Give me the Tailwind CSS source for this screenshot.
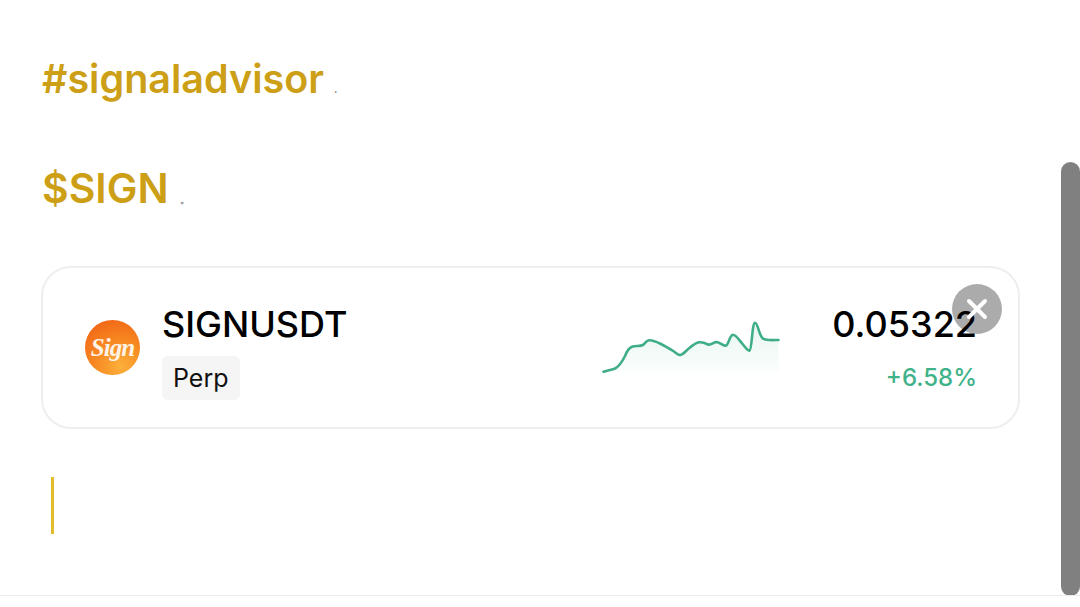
<!DOCTYPE html>
<html>
<head>
<meta charset="utf-8">
<script src="https://cdn.jsdelivr.net/npm/@tailwindcss/browser@4"></script>
</head>
<body class="bg-white">
<div class="relative w-[1080px] h-[607px] overflow-hidden bg-white font-['Inter','Liberation_Sans',sans-serif]">
  <div class="pl-[41px] pr-[60px] pt-[54px]">
    <div class="flex items-baseline h-[50px] pl-[1px] text-[39.5px] leading-[50px] font-semibold text-[#cc9f16]">
      <span>#signaladvisor</span><span class="ml-[10px] text-[10px] font-bold text-[#8a8a8a]">.</span>
    </div>
    <div class="flex items-baseline mt-[59px] h-[50px] pl-[1px] text-[41px] leading-[50px] font-semibold text-[#cc9f16]">
      <span>$SIGN</span><span class="ml-[11px] text-[10px] font-bold text-[#8a8a8a]">。</span>
    </div>
    <div class="relative mt-[53px] w-[979px] h-[163px] rounded-[30px] border-2 border-[#eeeeee] flex items-center pl-[42px] pr-[41px]">
      <div class="w-[55px] h-[55px] rounded-full bg-[radial-gradient(circle_at_65%_85%,#fbb03b_0%,#f7841f_50%,#ee5a14_100%)] flex items-center justify-center shrink-0">
        <span class="text-[#fff3e6] text-[25px] leading-none italic font-['Liberation_Serif',serif] font-bold tracking-[-1px]">Sign</span>
      </div>
      <div class="ml-[22px] pt-[7px] flex flex-col items-start">
        <span class="text-[36px] leading-[44px] font-medium text-black">SIGNUSDT</span>
        <span class="mt-[10px] h-[44px] px-[11px] rounded-[6px] bg-[#f5f5f5] text-[25px] leading-[44px] text-[#111111]">Perp</span>
      </div>
      <svg class="absolute left-[557px] top-[52px]" width="180" height="58" viewBox="600 320 180 58" fill="none">
        <defs><linearGradient id="g" x1="0" y1="0" x2="0" y2="1"><stop offset="0" stop-color="#3cb48a" stop-opacity="0.12"/><stop offset="1" stop-color="#3cb48a" stop-opacity="0.02"/></linearGradient></defs>
        <path d="M603.5 371.7C608 370 612 369.8 615 368.5C618 367 622 362 625 356C627 351 629 347.8 632 346.8C636 345.5 640 346.5 643 345C645 343.5 646 340.5 649 340.3C652 340.2 657 342 661 344C666 346.5 670 349 674 351.5C676 353 678 355 680 355C683 355 686 350.5 690 347.5C693 345.2 696 342.8 699 342.3C702 341.8 705 343 708 344.5C711 345.5 713 342.5 716 342C720 342 723 346 726 345.7C729 344 729.5 335 733 334.7C736 334.7 739 340 743 344.5C745 347 747 350.5 749.5 350.7C752 350 752 323 755 322.7C758 322.7 758.5 335 763 338.7C767 340.8 773 340 778.5 340V372H603.5Z" fill="url(#g)"/>
        <path d="M603.5 371.7C608 370 612 369.8 615 368.5C618 367 622 362 625 356C627 351 629 347.8 632 346.8C636 345.5 640 346.5 643 345C645 343.5 646 340.5 649 340.3C652 340.2 657 342 661 344C666 346.5 670 349 674 351.5C676 353 678 355 680 355C683 355 686 350.5 690 347.5C693 345.2 696 342.8 699 342.3C702 341.8 705 343 708 344.5C711 345.5 713 342.5 716 342C720 342 723 346 726 345.7C729 344 729.5 335 733 334.7C736 334.7 739 340 743 344.5C745 347 747 350.5 749.5 350.7C752 350 752 323 755 322.7C758 322.7 758.5 335 763 338.7C767 340.8 773 340 778.5 340" stroke="#3fae86" stroke-width="2.6" stroke-linecap="round"/>
      </svg>
      <div class="ml-auto pt-[2px] flex flex-col items-end">
        <span class="text-[36px] leading-[44px] font-medium text-black">0.05322</span>
        <span class="mt-[14px] text-[24px] leading-[36px] font-medium text-[#3fb28a]">+6.58%</span>
      </div>
      <div class="absolute left-[909px] top-[16px] w-[50px] h-[50px] rounded-full bg-black/33 flex items-center justify-center">
        <svg width="22" height="22" viewBox="0 0 22 22" fill="none"><path d="M3 3L19 19M19 3L3 19" stroke="#ffffff" stroke-width="4" stroke-linecap="round"/></svg>
      </div>
    </div>
    <div class="mt-[48px] ml-[10px] w-[3px] h-[57px] bg-[#e3bc2e]"></div>
  </div>
  <div class="absolute left-[1061px] top-[162px] w-[19px] h-[434px] rounded-full bg-[#808080]"></div>
  <div class="absolute left-0 right-0 top-[595px] h-px bg-[#ebebeb]"></div>
</div>
</body>
</html>
